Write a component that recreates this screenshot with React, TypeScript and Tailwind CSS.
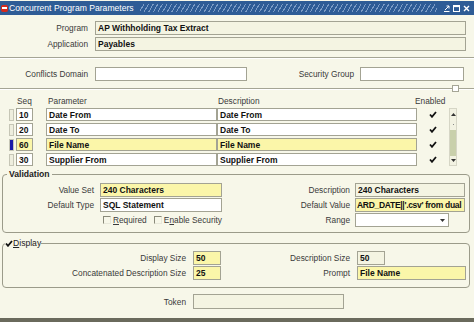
import clsx from "clsx"
import type { ReactNode } from "react"

type Tone = "y" | "w" | "c"

function Fld({ className, tone = "w", children, end }: { className?: string; tone?: Tone; children?: ReactNode; end?: boolean }) {
    return (
        <div
            className={clsx(
                "flex items-center h-[14px] border border-[#a3a393] px-[2px] text-[8.5px] font-bold leading-[12px] text-[#111] whitespace-nowrap overflow-hidden",
                tone === "y" && "bg-[#fbf6a9]",
                tone === "w" && "bg-white",
                tone === "c" && "bg-[#f4f4e2]",
                end && "justify-end",
                className
            )}
        >
            {children}
        </div>
    )
}

function Lbl({ className, children }: { className: string; children: ReactNode }) {
    return <span className={clsx("text-right text-[8.3px] leading-[14px] text-[#3a3a3a] shrink-0", className)}>{children}</span>
}

function Check() {
    return (
        <svg width="8" height="7" viewBox="0 0 8 7">
            <path d="M1 3.5 L3 5.8 L7 1" fill="none" stroke="#111" strokeWidth="1.8" />
        </svg>
    )
}

function Box() {
    return <span className="inline-block w-[8px] h-[8px] border-t border-l border-[#8a8a7a] border-b border-r border-b-[#e8e8da] border-r-[#e8e8da] bg-[#f7f7e9]" />
}

const rows = [
    { seq: "10", name: "Date From" },
    { seq: "20", name: "Date To" },
    { seq: "60", name: "File Name", on: true },
    { seq: "30", name: "Supplier From" },
]

export default function App() {
    return (
        <div className="w-[474px] h-[322px] overflow-hidden bg-[#f7f7e9] flex flex-col font-['Liberation_Sans',Arial,sans-serif]">
            {/* title bar */}
            <div className="flex items-center h-[14px] mt-[1px] bg-[#2e5c96]">
                <span className="ml-[1px] w-[7px] h-[7px] rounded-[2px] bg-[#d42a1c] flex items-center justify-center">
                    <span className="w-[5px] h-[2px] bg-white" />
                </span>
                <span className="ml-[1px] text-[8.6px] text-white leading-none">Concurrent Program Parameters</span>
                <div className="flex-1 h-[8px] mx-[6px] bg-[repeating-linear-gradient(120deg,transparent_0px,transparent_3px,#7c9cc6_3px,#7c9cc6_4px)]" />
                <div className="flex items-center gap-[3px] mr-[4px]">
                    <svg width="7" height="7" viewBox="0 0 7 7">
                        <path d="M1 6.5 H6.5 M2 5 L6 1 M3.5 1 H6 V3.5" fill="none" stroke="#fff" strokeWidth="1" />
                    </svg>
                    <svg width="7" height="7" viewBox="0 0 7 7">
                        <rect x="0.5" y="0.5" width="6" height="6" fill="none" stroke="#fff" strokeWidth="1" />
                        <path d="M0.5 1.5 H6.5" stroke="#fff" strokeWidth="1.2" />
                    </svg>
                    <svg width="7" height="7" viewBox="0 0 7 7">
                        <path d="M1 1 L6 6 M6 1 L1 6" stroke="#fff" strokeWidth="1.4" />
                    </svg>
                </div>
            </div>

            {/* program */}
            <div className="pt-[6px] flex flex-col gap-[2px]">
                <div className="flex items-center">
                    <Lbl className="w-[88px]">Program</Lbl>
                    <Fld tone="c" className="ml-[7px] w-[371px]">AP Withholding Tax Extract</Fld>
                </div>
                <div className="flex items-center">
                    <Lbl className="w-[88px]">Application</Lbl>
                    <Fld tone="c" className="ml-[7px] w-[371px]">Payables</Fld>
                </div>
            </div>

            <div className="mt-[6px] h-[2px] border-t border-[#a5a595] border-b border-b-white" />

            <div className="mt-[8px] flex items-center">
                <Lbl className="w-[88px]">Conflicts Domain</Lbl>
                <Fld className="ml-[7px] w-[152px]" />
                <Lbl className="w-[107px]">Security Group</Lbl>
                <Fld className="ml-[6px] w-[104px]" />
            </div>

            <div className="mt-[4px] h-[7px] flex items-center">
                <div className="flex-1 h-[2px] border-t border-[#a5a595] border-b border-b-white" />
                <span className="w-[7px] h-[7px] border border-[#a5a595] bg-white" />
                <div className="w-[15px] h-[2px] border-t border-[#a5a595] border-b border-b-white" />
            </div>

            {/* table */}
            <div className="mt-[4px] h-[10px] flex text-[8.3px] leading-[10px] text-[#3a3a3a] pl-[17px]">
                <span className="w-[29px]">Seq</span>
                <span className="w-[171px] pl-[2px]">Parameter</span>
                <span className="w-[198px] pl-[1px]">Description</span>
                <span>Enabled</span>
            </div>
            <div className="mt-[2px] flex">
                <div className="pl-[9px] flex flex-col gap-[2px]">
                    {rows.map((r) => (
                        <div key={r.seq} className="flex items-center h-[13px]">
                            <span className={clsx("w-[5px] h-[12px] border border-[#c6c6b6]", r.on ? "bg-[#1a1aa8] border-[#1a1aa8]" : "bg-[#eeeede]")} />
                            <Fld tone={r.on ? "y" : "w"} className="ml-[2px] w-[17px] !h-[13px]">{r.seq}</Fld>
                            <Fld tone={r.on ? "y" : "w"} className="ml-[13px] w-[171px] !h-[13px]">{r.name}</Fld>
                            <Fld tone={r.on ? "y" : "w"} className="w-[200px] !h-[13px]">{r.name}</Fld>
                            <span className="w-[32px] flex justify-center">
                                <Check />
                            </span>
                        </div>
                    ))}
                </div>
                <div className="w-[8px] h-[58px] flex flex-col border border-[#d6d6c6] bg-[#f2f2e2]">
                    <div className="h-[10px] flex items-center justify-center">
                        <svg width="5" height="3" viewBox="0 0 5 3"><path d="M0 3 L2.5 0 L5 3Z" fill="#333" /></svg>
                    </div>
                    <div className="h-[11px] flex items-center justify-center">
                        <span className="w-[1px] h-[1px] bg-[#888]" />
                    </div>
                    <div className="flex-1 bg-[#c9d0ab]" />
                    <div className="h-[9px] flex items-center justify-center">
                        <svg width="5" height="3" viewBox="0 0 5 3"><path d="M0 0 L2.5 3 L5 0Z" fill="#333" /></svg>
                    </div>
                </div>
            </div>

            {/* validation */}
            <fieldset className="mt-[3px] ml-[2px] w-[468px] border border-[#9b9b8a] rounded-[4px] pt-[4px] pb-[5px] flex flex-col gap-[1px]">
                <legend className="ml-[4px] px-[2px] text-[8.6px] font-bold leading-[10px] text-[#222]">Validation</legend>
                <div className="flex items-center">
                    <Lbl className="w-[91px]">Value Set</Lbl>
                    <Fld tone="y" className="ml-[6px] w-[122px]">240 Characters</Fld>
                    <Lbl className="w-[128px]">Description</Lbl>
                    <Fld tone="c" className="ml-[5px] w-[110px]">240 Characters</Fld>
                </div>
                <div className="flex items-center">
                    <Lbl className="w-[91px]">Default Type</Lbl>
                    <Fld className="ml-[6px] w-[122px]">SQL Statement</Fld>
                    <Lbl className="w-[128px]">Default Value</Lbl>
                    <Fld tone="y" className="ml-[5px] w-[110px] !px-[1px] tracking-[-0.3px]">ARD_DATE||'.csv' from dual</Fld>
                </div>
                <div className="flex items-center">
                    <div className="w-[219px] flex items-center pl-[100px] text-[8.3px] text-[#3a3a3a]">
                        <span className="w-[77px] flex items-center gap-[2px]">
                            <Box />
                            <span><u>R</u>equired</span>
                        </span>
                        <span className="flex items-center gap-[2px] whitespace-nowrap">
                            <Box />
                            <span>E<u>n</u>able Security</span>
                        </span>
                    </div>
                    <Lbl className="w-[128px]">Range</Lbl>
                    <Fld className="ml-[5px] w-[94px] justify-end">
                        <svg width="5" height="3" viewBox="0 0 5 3" className="mr-[1px]"><path d="M0 0 L2.5 3 L5 0Z" fill="#333" /></svg>
                    </Fld>
                </div>
            </fieldset>

            {/* display */}
            <fieldset className="mt-[5px] ml-[2px] w-[468px] border border-[#9b9b8a] rounded-[4px] pt-[3px] pb-[7px] flex flex-col gap-[1px]">
                <legend className="ml-[2px] flex items-center text-[8.6px] leading-[10px] text-[#222]">
                    <Check />
                    <span><u>D</u>isplay</span>
                </legend>
                <div className="flex items-center">
                    <Lbl className="w-[183px]">Display Size</Lbl>
                    <Fld tone="y" className="ml-[7px] w-[28px]">50</Fld>
                    <Lbl className="w-[129px]">Description Size</Lbl>
                    <Fld tone="c" className="ml-[7px] w-[28px]">50</Fld>
                </div>
                <div className="flex items-center">
                    <Lbl className="w-[183px]">Concatenated Description Size</Lbl>
                    <Fld tone="y" className="ml-[7px] w-[28px]">25</Fld>
                    <Lbl className="w-[129px]">Prompt</Lbl>
                    <Fld tone="y" className="ml-[7px] w-[109px]">File Name</Fld>
                </div>
            </fieldset>

            <div className="mt-[6px] flex items-center">
                <Lbl className="w-[186px]">Token</Lbl>
                <Fld tone="c" className="ml-[7px] w-[151px] !h-[15px]" />
            </div>

            <div className="mt-auto h-[4px] bg-[#6a6a5c]" />
        </div>
    )
}
